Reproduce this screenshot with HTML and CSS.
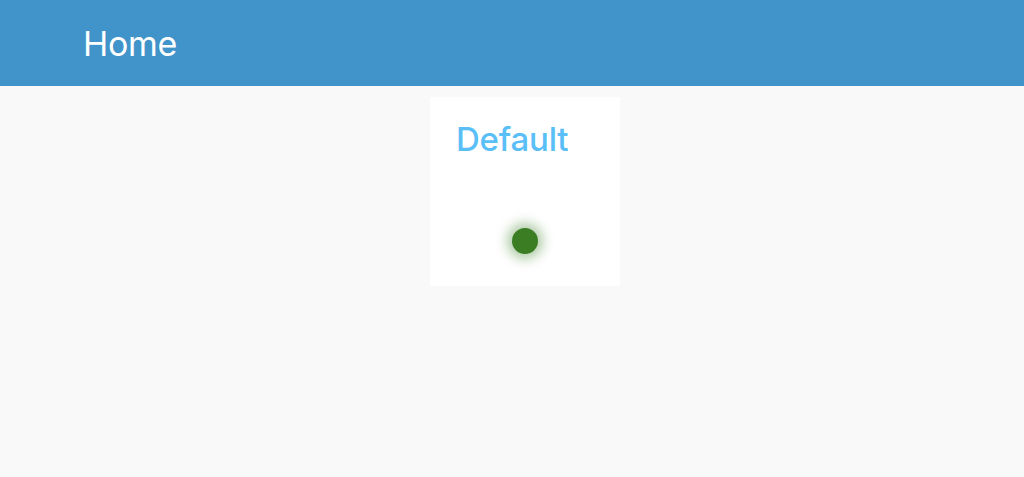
FILE: index.html
```html
<!DOCTYPE html>
<html>
<head>
<meta charset="utf-8">
<link rel="stylesheet" href="styles.css">
</head>
<body>
<header class="topbar"><h1 class="title">Home</h1></header>
<main class="content">
  <section class="card">
    <h2 class="card-title">Default</h2>
    <div class="dot-wrap"><span class="dot"></span></div>
  </section>
</main>
</body>
</html>
```
FILE: styles.css
```css
html, body { margin: 0; padding: 0; }
body {
  background: #f9f9f9;
  font-family: "Inter", "Liberation Sans", sans-serif;
  height: 477px;
  overflow: hidden;
}
.topbar {
  height: 86px;
  background: #4194ca;
  display: flex;
  align-items: center;
  padding-left: 83px;
  box-sizing: border-box;
}
.title {
  margin: 0;
  color: #fff;
  font-weight: 400;
  font-size: 34px;
  letter-spacing: -0.3px;
}
.content {
  display: flex;
  justify-content: center;
  padding-top: 11px;
  padding-left: 26px;
}
.card {
  width: 190px;
  height: 189px;
  background: #fff;
  box-sizing: border-box;
  padding: 22px 24px 0 26px;
}
.card-title {
  margin: 0;
  color: #5abef7;
  font-weight: 500;
  font-size: 33px;
  letter-spacing: -0.2px;
  line-height: 40px;
}
.dot-wrap {
  display: flex;
  justify-content: center;
  padding-top: 69px;
  padding-right: 2px;
}
.dot {
  width: 26px;
  height: 26px;
  border-radius: 50%;
  background: #3a7d22;
  box-shadow: 0 0 12px 5px rgba(58, 125, 34, 0.4);
  display: block;
}
```
